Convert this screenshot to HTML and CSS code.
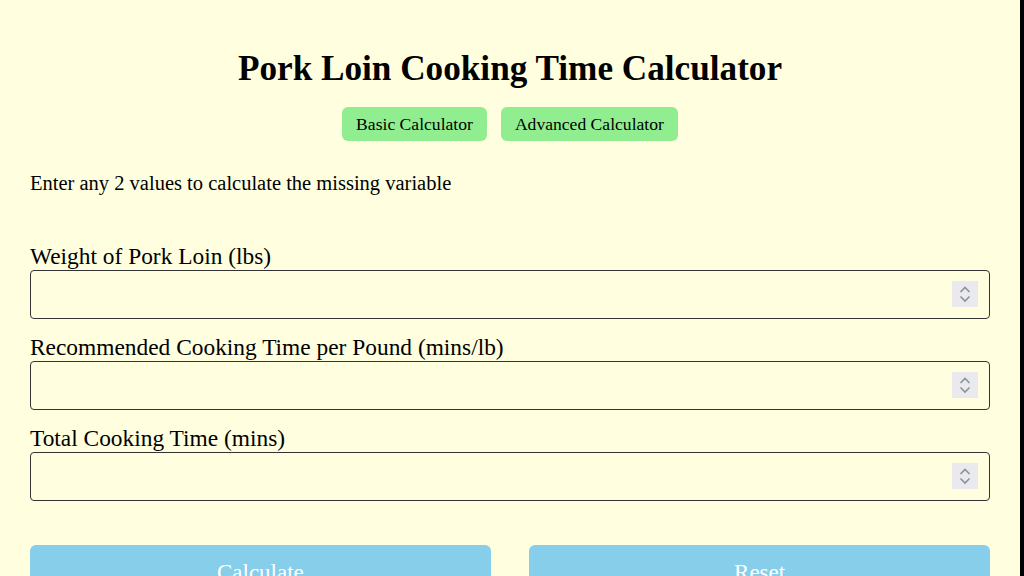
FILE: index.html
```html
<!DOCTYPE html>
<html lang="en">
<head>
<meta charset="utf-8">
<title>Pork Loin Cooking Time Calculator</title>
<link rel="stylesheet" href="styles.css">
</head>
<body>
<div class="page">
  <h1 class="title">Pork Loin Cooking Time Calculator</h1>
  <div class="tabs">
    <button class="tab">Basic Calculator</button>
    <button class="tab">Advanced Calculator</button>
  </div>
  <p class="intro">Enter any 2 values to calculate the missing variable</p>
  <form class="form">
    <div class="field">
      <label class="label" for="weight">Weight of Pork Loin (lbs)</label>
      <div class="control">
        <input class="input" id="weight" type="number">
        <span class="spin"><svg width="26" height="26" viewBox="0 0 26 26"><path d="M8.5 11 L13 6.5 L17.5 11" /><path d="M8.5 15.5 L13 20 L17.5 15.5" /></svg></span>
      </div>
    </div>
    <div class="field">
      <label class="label" for="rate">Recommended Cooking Time per Pound (mins/lb)</label>
      <div class="control">
        <input class="input" id="rate" type="number">
        <span class="spin"><svg width="26" height="26" viewBox="0 0 26 26"><path d="M8.5 11 L13 6.5 L17.5 11" /><path d="M8.5 15.5 L13 20 L17.5 15.5" /></svg></span>
      </div>
    </div>
    <div class="field">
      <label class="label" for="total">Total Cooking Time (mins)</label>
      <div class="control">
        <input class="input" id="total" type="number">
        <span class="spin"><svg width="26" height="26" viewBox="0 0 26 26"><path d="M8.5 11 L13 6.5 L17.5 11" /><path d="M8.5 15.5 L13 20 L17.5 15.5" /></svg></span>
      </div>
    </div>
    <div class="actions">
      <button type="button" class="action">Calculate</button>
      <button type="reset" class="action">Reset</button>
    </div>
  </form>
</div>
</body>
</html>
```
FILE: styles.css
```css
html, body {
  margin: 0;
  background: #ffffe0;
}
body {
  font-family: "Liberation Serif", "Times New Roman", serif;
  color: #000;
}
.page {
  width: 1024px;
  min-height: 576px;
  box-sizing: border-box;
  padding: 50px 30px 0;
  background: #ffffe0;
  border-right: 4px solid #000;
  overflow: hidden;
}
.title {
  margin: 0;
  text-align: center;
  font-size: 35.2px;
  line-height: 37px;
  font-weight: bold;
}
.tabs {
  display: flex;
  justify-content: center;
  gap: 14px;
  margin-top: 20px;
}
.tab {
  font-family: inherit;
  font-size: 17.6px;
  background: #90ee90;
  border: none;
  border-radius: 6px;
  padding: 0 14px;
  height: 34px;
  color: #000;
}
.intro {
  margin: 32px 0 0;
  font-size: 20.5px;
  line-height: 21px;
}
.form {
  margin-top: 51px;
}
.field {
  margin-bottom: 17px;
}
.label {
  display: block;
  font-size: 23.4px;
  line-height: 23px;
  margin-bottom: 2px;
}
.control {
  position: relative;
}
.input {
  display: block;
  width: 100%;
  box-sizing: border-box;
  height: 49px;
  padding: 12px;
  font-family: inherit;
  font-size: 20px;
  background: transparent;
  border: 1px solid #333;
  border-radius: 4px;
  -moz-appearance: textfield;
}
.input::-webkit-inner-spin-button,
.input::-webkit-outer-spin-button {
  -webkit-appearance: none;
  margin: 0;
}
.spin {
  position: absolute;
  right: 12px;
  top: 11px;
  width: 26px;
  height: 26px;
  background: #e9e9ee;
  pointer-events: none;
}
.spin svg {
  display: block;
  fill: none;
  stroke: #8a939e;
  stroke-width: 1.6;
}
.actions {
  display: flex;
  justify-content: space-between;
  margin-top: 44px;
}
.action {
  width: 48%;
  font-family: inherit;
  font-size: 23px;
  color: #fff;
  background: #87ceeb;
  border: none;
  border-radius: 6px;
  padding: 15px;
}
```
